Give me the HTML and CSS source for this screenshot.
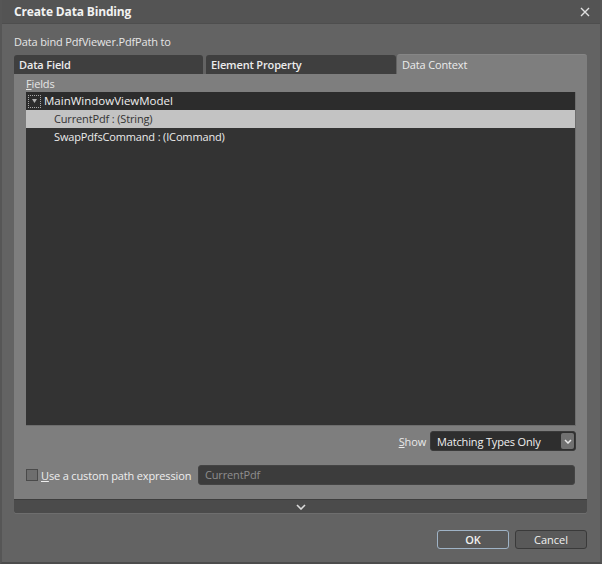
FILE: index.html
```html
<!DOCTYPE html>
<html lang="en">
<head>
  <meta charset="UTF-8">
  <title>Create Data Binding</title>
  <link rel="stylesheet" href="styles.css">
</head>
<body>
  <div class="dialog">
    <div class="titlebar">
      <span class="title">Create Data Binding</span>
      <svg class="close" width="10" height="10" viewBox="0 0 10 10"><path d="M1 1 L9 9 M9 1 L1 9" stroke="#e0e0e0" stroke-width="1.4"/></svg>
    </div>
    <div class="content">
      <div class="intro">Data bind PdfViewer.PdfPath to</div>
      <div class="tabs">
        <div class="tab">Data Field</div>
        <div class="tab">Element Property</div>
        <div class="tab active">Data Context</div>
      </div>
      <div class="panel">
        <div class="fields-label"><u>F</u>ields</div>
        <div class="tree">
          <div class="row root">
            <span class="toggle"><svg width="5" height="4" viewBox="0 0 5 4"><path d="M0 0 H5 L2.5 4 Z" fill="#b0b0b0"/></svg></span>
            <span class="root-name">MainWindowViewModel</span>
          </div>
          <div class="row child selected">CurrentPdf : (String)</div>
          <div class="row child">SwapPdfsCommand : (ICommand)</div>
        </div>
        <div class="show-row">
          <span class="show-label"><u>S</u>how</span>
          <div class="combo">
            <span>Matching Types Only</span>
            <span class="combo-btn"><svg width="8" height="5" viewBox="0 0 8 5"><path d="M1 1 L4 4 L7 1" stroke="#e8e8e8" stroke-width="1.5" fill="none"/></svg></span>
          </div>
        </div>
        <div class="path-row">
          <span class="checkbox"></span>
          <span class="path-label"><u>U</u>se a custom path expression</span>
          <div class="path-input">CurrentPdf</div>
        </div>
        <div class="expander">
          <svg width="10" height="6" viewBox="0 0 10 6"><path d="M1 1 L5 5 L9 1" stroke="#dcdcdc" stroke-width="1.6" fill="none"/></svg>
        </div>
      </div>
      <div class="buttons">
        <button class="btn default">OK</button>
        <button class="btn">Cancel</button>
      </div>
    </div>
  </div>
</body>
</html>
```
FILE: styles.css
```css
html, body {
  margin: 0;
  padding: 0;
  background: #636363;
}
body {
  font-family: "Open Sans", "Noto Sans", sans-serif;
  font-size: 11px;
  letter-spacing: -0.15px;
  color: #e6e6e6;
}
.dialog {
  width: 602px;
  height: 564px;
  box-sizing: border-box;
  border-left: 2px solid #565656;
  border-right: 2px solid #565656;
  border-bottom: 2px solid #4c4c4c;
  background: #636363;
  display: flex;
  flex-direction: column;
}
.titlebar {
  height: 23px;
  background: #545454;
  border-bottom: 1px solid #4e4e4e;
  display: flex;
  align-items: center;
  justify-content: space-between;
  padding: 0 10px 0 12px;
}
.title {
  font-weight: bold;
  font-size: 12px;
  color: #f2f2f2;
}
.close {
  margin-top: 1px;
}
.content {
  padding: 11px 13px 0 12px;
  flex: 1;
  display: flex;
  flex-direction: column;
}
.intro {
  height: 20px;
  line-height: 14px;
}
.tabs {
  display: flex;
  height: 19px;
}
.tab {
  box-sizing: border-box;
  width: 189px;
  background: #3f3f3f;
  border-radius: 3px 3px 0 0;
  padding-left: 5px;
  line-height: 20px;
  font-weight: 600;
  color: #ececec;
}
.tab:nth-child(2) {
  width: 190px;
  margin-left: 3px;
}
.tab.active {
  flex: 1;
  margin-left: 1px;
  background: #7e7e7e;
  font-weight: normal;
  border-top: 1px solid #868686;
  margin-top: -1px;
}
.panel {
  background: #7e7e7e;
  padding: 3px 0 0 12px;
  border-radius: 0 0 3px 3px;
  display: flex;
  flex-direction: column;
}
.fields-label {
  height: 15px;
  line-height: 14px;
}
.tree {
  width: 549px;
  height: 333px;
  background: #333333;
  border: 1px solid #6e6e6e;
  border-width: 0 1px 1px 0;
}
.row {
  height: 18px;
  line-height: 18px;
}
.row.root {
  background: #2c2c2c;
  padding-left: 2px;
  display: flex;
  align-items: center;
  gap: 3px;
  color: #efefef;
}
.root-name {
  font-size: 11.5px;
  letter-spacing: 0;
}
.toggle {
  width: 11px;
  height: 11px;
  border: 1px dotted #a8a8a8;
  display: flex;
  align-items: center;
  justify-content: center;
}
.row.child {
  padding-left: 28px;
  color: #ececec;
}
.row.selected {
  background: #c3c3c3;
  color: #333;
}
.show-row {
  display: flex;
  justify-content: flex-end;
  align-items: center;
  gap: 4px;
  width: 550px;
  margin-top: 5px;
  height: 20px;
}
.show-label {
  color: #e9e9e9;
}
.combo {
  box-sizing: border-box;
  width: 146px;
  height: 20px;
  border: 1px solid #3a3a3a;
  background: #2e2e2e;
  border-radius: 3px;
  display: flex;
  align-items: center;
  justify-content: space-between;
  padding-left: 6px;
  padding-right: 1px;
  color: #f0f0f0;
}
.combo-btn {
  width: 13px;
  height: 16px;
  background: #717171;
  border-radius: 2px;
  display: flex;
  align-items: center;
  justify-content: center;
}
.path-row {
  display: flex;
  align-items: center;
  height: 22px;
  margin-top: 13px;
}
.checkbox {
  box-sizing: border-box;
  width: 12px;
  height: 12px;
  border: 1px solid #4a4a4a;
  background: #6e6e6e;
  margin-right: 3px;
}
.path-label {
  width: 157px;
  color: #eeeeee;
}
.path-input {
  box-sizing: border-box;
  width: 377px;
  height: 20px;
  background: #3c3c3c;
  border: 1px solid #444;
  border-radius: 3px;
  padding-left: 6px;
  line-height: 18px;
  color: #8e8e8e;
}
.expander {
  margin: 13px 0 0 -12px;
  height: 13px;
  background: #4b4b4b;
  border-top: 1px solid #3e3e3e;
  border-bottom: 1px solid #6e6e6e;
  border-radius: 0 0 3px 3px;
  display: flex;
  justify-content: center;
  align-items: center;
}
.buttons {
  display: flex;
  justify-content: flex-end;
  gap: 6px;
  margin-top: 16px;
}
.btn {
  width: 72px;
  height: 19px;
  background: #595959;
  border: 1px solid #3a3a3a;
  border-radius: 3px;
  font-family: inherit;
  font-size: 11px;
  color: #f0f0f0;
  padding: 0;
}
.btn.default {
  border-color: #9fb3c6;
  font-weight: 600;
}
```
